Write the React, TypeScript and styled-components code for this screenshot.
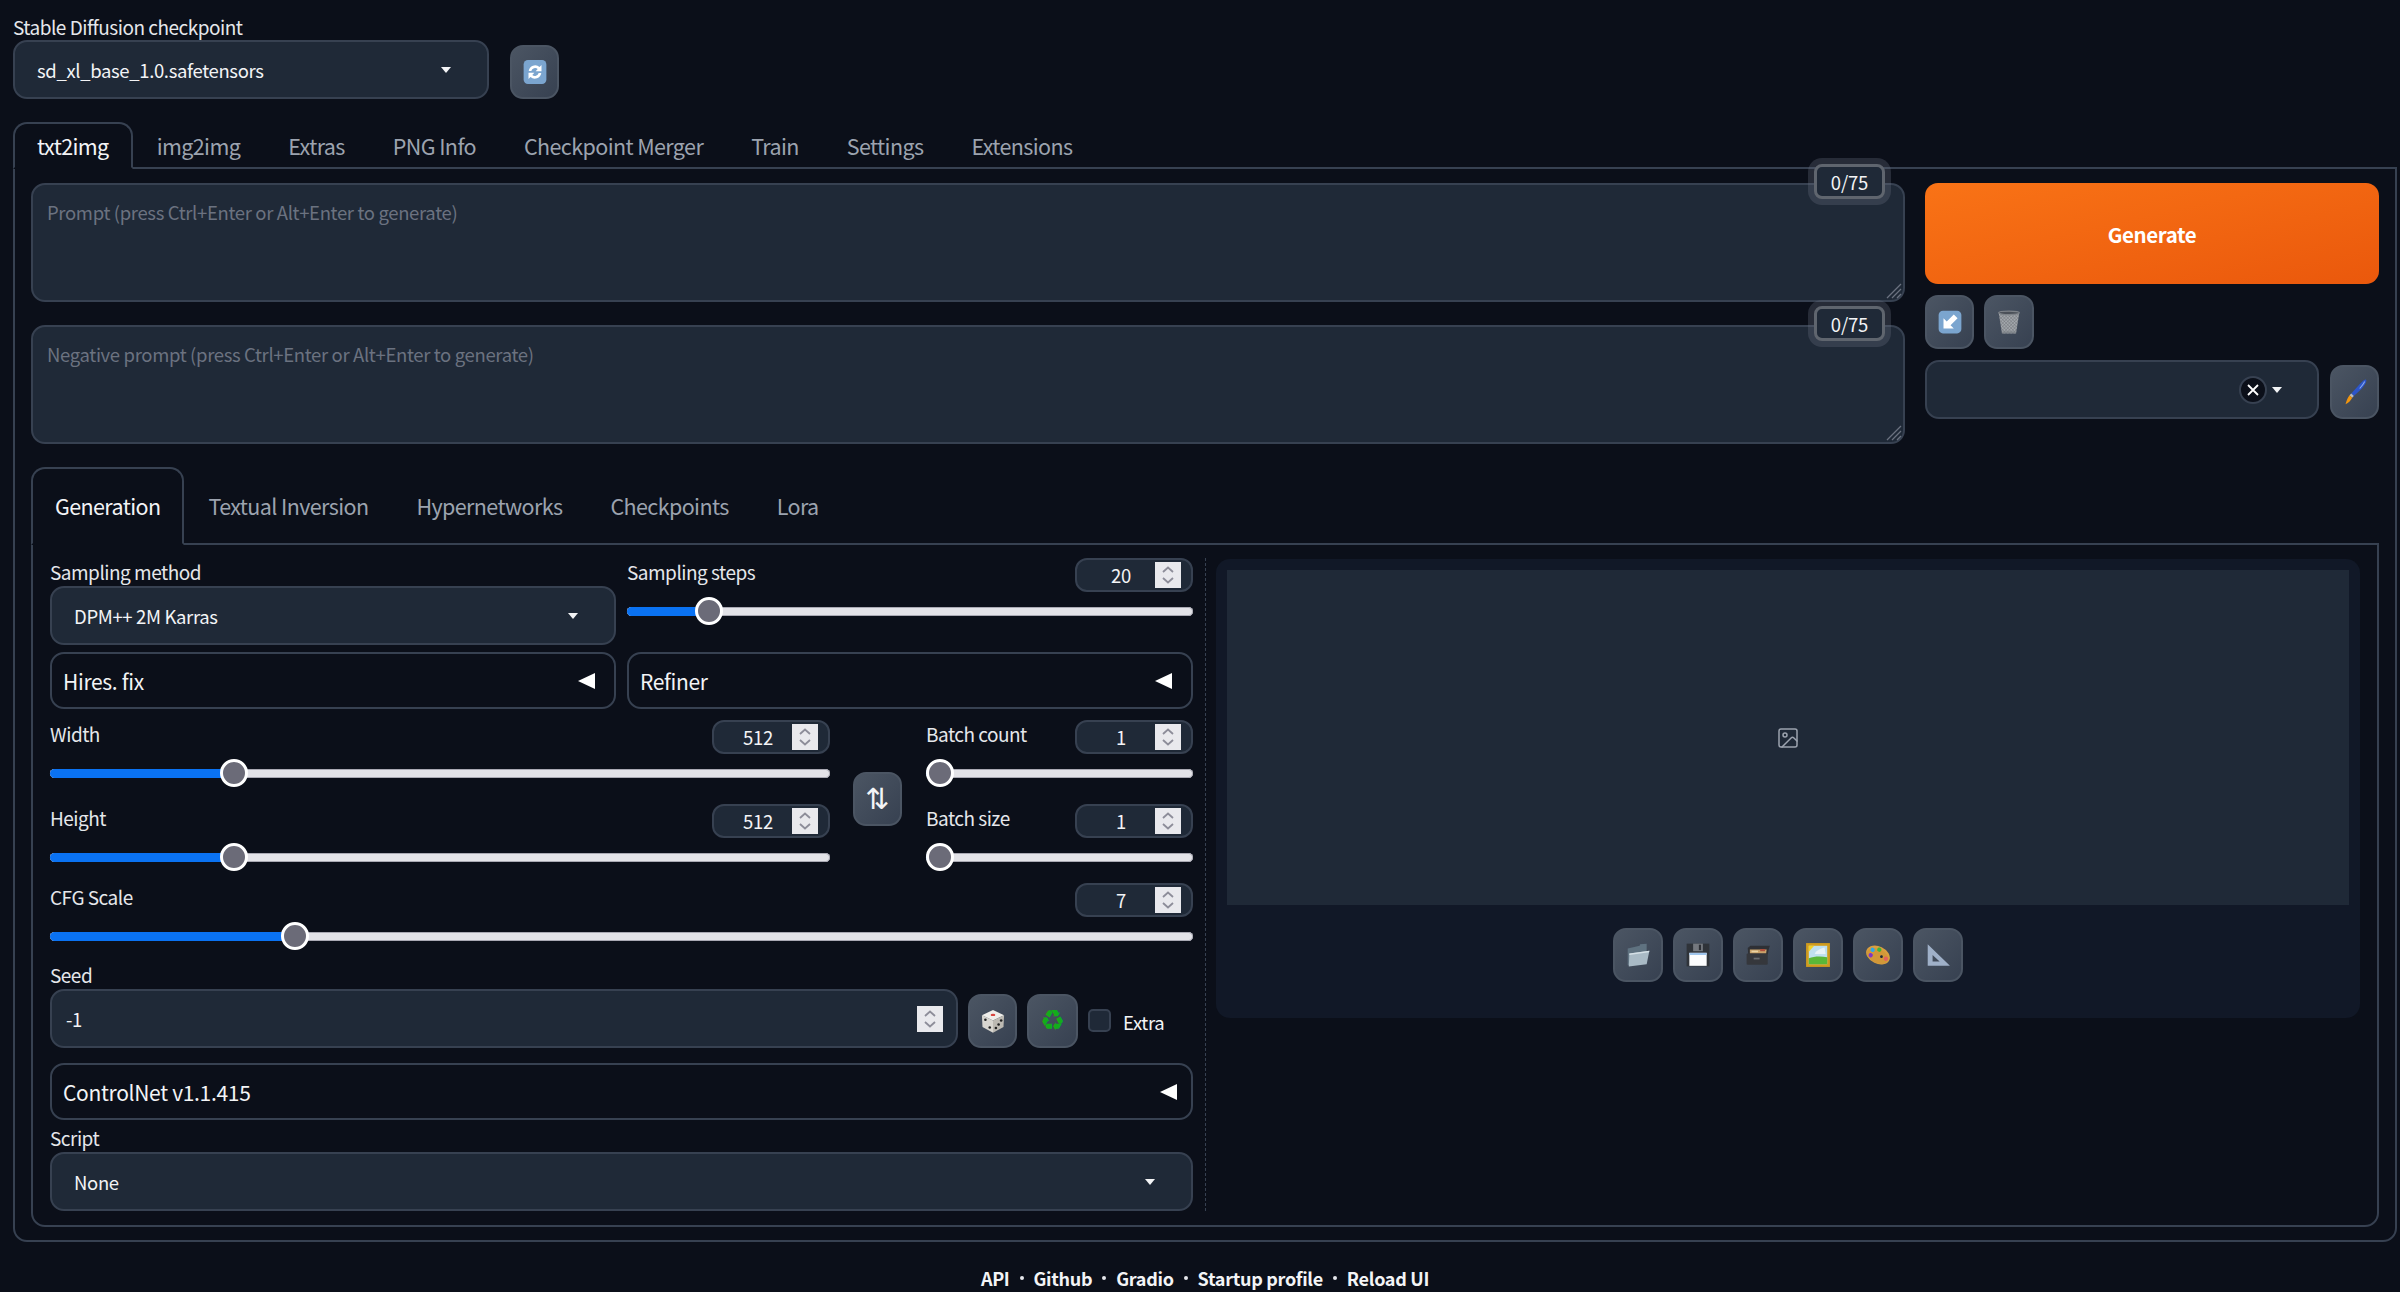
import React from "react";
import styled, { createGlobalStyle } from "styled-components";
import { Image as ImageIcon } from "lucide-react";

const Global = createGlobalStyle`
  html, body { margin: 0; padding: 0; background: #0b0f19; overflow: hidden; }
  * { box-sizing: border-box; }
  body { font-family: "Noto Sans CJK SC", "Noto Sans", sans-serif; color: #f3f4f6; }
`;

const Page = styled.div`
  width: 2400px;
  padding: 15px 3px 0 13px;
  display: flex;
  flex-direction: column;
`;
const FieldLabel = styled.div`
  font-size: 19px;
  letter-spacing: -0.5px;
  line-height: 24px;
  height: 25px;
  color: #e5e7eb;
`;
const Inline = styled.div<{ $gap?: number }>`
  display: flex;
  align-items: flex-end;
  gap: ${(p) => p.$gap ?? 11}px;
`;
const Dropdown = styled.div<{ $w?: number; $h?: number }>`
  width: ${(p) => (p.$w ? `${p.$w}px` : "100%")};
  height: ${(p) => p.$h ?? 59}px;
  flex: none;
  background: #1f2937;
  border: 2px solid #374151;
  border-radius: 14px;
  padding: 0 36px 0 22px;
  display: flex;
  align-items: center;
  justify-content: space-between;
  font-size: 18.5px;
  letter-spacing: -0.35px;
  color: #f3f4f6;
`;
const Caret = styled.span`
  width: 0;
  height: 0;
  border-left: 5.5px solid transparent;
  border-right: 5.5px solid transparent;
  border-top: 6px solid #f3f4f6;
`;
const IconBtn = styled.button<{ $w?: number }>`
  width: ${(p) => p.$w ?? 49}px;
  height: 54px;
  flex: none;
  padding: 0;
  display: flex;
  align-items: center;
  justify-content: center;
  color: #f3f4f6;
  background: linear-gradient(to bottom right, #4b5563, #374151);
  border: 2px solid #4b5563;
  border-radius: 13px;
`;
const TabBar = styled.div<{ $h: number; $mt?: number }>`
  display: flex;
  height: ${(p) => p.$h}px;
  margin-top: ${(p) => p.$mt ?? 0}px;
  align-items: stretch;
  position: relative;
  z-index: 1;
`;
const Tab = styled.div<{ $active?: boolean }>`
  display: flex;
  align-items: center;
  padding: 0 22px 1px;
  font-size: 21.5px;
  letter-spacing: -0.6px;
  color: ${(p) => (p.$active ? "#f3f4f6" : "#9ca3af")};
  border: 2px solid ${(p) => (p.$active ? "#374151" : "transparent")};
  border-bottom: 2px solid ${(p) => (p.$active ? "#0b0f19" : "transparent")};
  border-radius: 14px 14px 0 0;
  margin-bottom: -2px;
`;
const MainPanel = styled.div`
  border: 2px solid #374151;
  border-radius: 0 0 14px 14px;
  padding: 14px 16px 14px 16px;
  height: 1075px;
`;
const TopRow = styled.div`
  display: flex;
  gap: 20px;
  align-items: flex-start;
`;
const PromptCol = styled.div`
  width: 1874px;
  display: flex;
  flex-direction: column;
  gap: 23px;
`;
const PromptWrap = styled.div`
  position: relative;
  height: 119px;
`;
const PromptInput = styled.textarea`
  display: block;
  width: 100%;
  height: 100%;
  resize: none;
  background: #1f2937;
  border: 2px solid #374151;
  border-radius: 14px;
  padding: 14px 14px;
  outline: none;
  font-family: inherit;
  font-size: 18.5px;
  letter-spacing: -0.35px;
  line-height: 26px;
  color: #f3f4f6;
  &::placeholder { color: #6b7280; opacity: 1; }
`;
const ResizeMark = styled.svg`
  position: absolute;
  right: 3px;
  bottom: 3px;
  width: 16px;
  height: 16px;
`;
const Counter = styled.div`
  position: absolute;
  top: -19px;
  right: 20px;
  width: 71px;
  height: 35px;
  display: flex;
  align-items: center;
  justify-content: center;
  font-size: 18.5px;
  letter-spacing: -0.2px;
  color: #f3f4f6;
  background: #1f2937;
  border: 3px solid #5f656e;
  border-radius: 8px;
  box-shadow: 0 0 0 6px rgba(107, 114, 128, 0.3);
`;
const ActionCol = styled.div`
  width: 454px;
  display: flex;
  flex-direction: column;
  gap: 11px;
`;
const GenerateBtn = styled.button`
  height: 101px;
  border: none;
  border-radius: 13px;
  background: linear-gradient(to bottom right, #f97316, #ea580c);
  color: #fff;
  font-family: inherit;
  font-size: 20.5px;
  letter-spacing: -0.4px;
  font-weight: 700;
`;
const ClearBtn = styled.span`
  width: 28px;
  height: 28px;
  border-radius: 50%;
  background: #0b0f19;
  border: 2px solid #374151;
  display: flex;
  align-items: center;
  justify-content: center;
`;
const StyleField = styled(Dropdown)`
  padding: 0 35px 0 22px;
  justify-content: flex-end;
  gap: 5px;
`;
const SubPanel = styled.div`
  border: 2px solid #374151;
  border-radius: 0 0 14px 14px;
  height: 684px;
  padding: 13px 16px 0 17px;
  display: flex;
  align-items: flex-start;
`;
const LeftCol = styled.div`
  width: 1143px;
  flex: none;
  display: flex;
  flex-direction: column;
`;
const Divider = styled.div`
  width: 0;
  height: 653px;
  flex: none;
  margin: 0 10px 0 12px;
  border-left: 1.5px dashed #374151;
`;
const TwoCols = styled.div<{ $mt?: number }>`
  display: grid;
  grid-template-columns: 566px 566px;
  gap: 11px;
  margin-top: ${(p) => p.$mt ?? 0}px;
`;
const LabelLine = styled.div<{ $mt?: number }>`
  font-size: 19px;
  letter-spacing: -0.5px;
  line-height: 28px;
  height: 28px;
  margin-top: ${(p) => p.$mt ?? 0}px;
  color: #e5e7eb;
`;
const SliderHead = styled.div`
  display: flex;
  justify-content: space-between;
  align-items: flex-start;
  height: 34px;
`;
const NumberBox = styled.div<{ $w?: number }>`
  width: ${(p) => p.$w ?? 118}px;
  height: 34px;
  background: #1f2937;
  border: 2px solid #374151;
  border-radius: 12px;
  display: flex;
  align-items: center;
  justify-content: flex-end;
  padding-right: 10px;
  font-size: 18.5px;
  letter-spacing: -0.35px;
  color: #f3f4f6;
`;
const NumberValue = styled.span`
  width: 50px;
  text-align: center;
  margin-right: 9px;
`;
const Spin = styled.span`
  width: 26px;
  height: 26px;
  flex: none;
  background: #e9e9ed;
  display: flex;
  align-items: center;
  justify-content: center;
`;
const SliderWrap = styled.div<{ $mt?: number }>`
  margin-top: ${(p) => p.$mt ?? 0}px;
`;
const Track = styled.div`
  position: relative;
  height: 28px;
  margin-top: 5px;
  display: flex;
  align-items: center;
`;
const Rail = styled.div`
  width: 100%;
  height: 9px;
  border-radius: 5px;
  background: #e3e3e8;
  box-shadow: inset 0 0 0 1px #a9a9b3;
  overflow: hidden;
`;
const Fill = styled.div`
  height: 100%;
  background: #0a72f2;
`;
const Thumb = styled.div`
  position: absolute;
  top: 0;
  width: 28px;
  height: 28px;
  margin-left: -14px;
  border-radius: 50%;
  background: #6b6b78;
  border: 3px solid #fff;
`;
const AccordionBox = styled.div<{ $mt?: number; $pr?: number }>`
  height: 57px;
  border: 2px solid #374151;
  border-radius: 14px;
  padding: 0 ${(p) => p.$pr ?? 19}px 0 11px;
  margin-top: ${(p) => p.$mt ?? 0}px;
  display: flex;
  align-items: center;
  justify-content: space-between;
  font-size: 21px;
  letter-spacing: -0.32px;
  color: #f3f4f6;
`;
const LeftTriangle = styled.span`
  width: 0;
  height: 0;
  border-top: 8.5px solid transparent;
  border-bottom: 8.5px solid transparent;
  border-right: 17px solid #fff;
`;
const DimRow = styled.div`
  display: flex;
  margin-top: 11px;
`;
const DimCol = styled.div<{ $w: number; $ml?: number }>`
  width: ${(p) => p.$w}px;
  margin-left: ${(p) => p.$ml ?? 0}px;
  display: flex;
  flex-direction: column;
  gap: 17px;
  flex: none;
`;
const SwapSlot = styled.div`
  margin: 52px 0 0 23px;
`;
const SwapGlyph = styled.span`
  font-family: "DejaVu Sans", sans-serif;
  font-size: 29px;
  line-height: 1;
`;
const RecycleGlyph = styled.span`
  font-family: "DejaVu Sans", sans-serif;
  font-size: 28px;
  line-height: 1;
  color: #12ad1a;
`;
const SeedBox = styled(NumberBox)`
  width: 908px;
  height: 59px;
  border-radius: 14px;
  justify-content: space-between;
  padding: 0 13px 0 14px;
`;
const Check = styled.span`
  width: 23px;
  height: 23px;
  flex: none;
  margin: 0 2px 16px 0;
  background: #1f2937;
  border: 2px solid #374151;
  border-radius: 5px;
`;
const ExtraText = styled.span`
  font-size: 18.5px;
  letter-spacing: -0.35px;
  line-height: 26px;
  margin-bottom: 13px;
  color: #f3f4f6;
`;
const RightCol = styled.div`
  width: 1144px;
  height: 459px;
  flex: none;
  margin-top: 1px;
  background: #111827;
  border-radius: 14px;
  padding: 11px;
  display: flex;
  flex-direction: column;
`;
const ImageArea = styled.div`
  height: 335px;
  background: #1f2937;
  display: flex;
  align-items: center;
  justify-content: center;
  color: #9ca3af;
`;
const ToolRow = styled.div`
  margin-top: 23px;
  display: flex;
  justify-content: center;
  gap: 10px;
`;
const Footer = styled.div`
  margin-top: 24px;
  height: 24px;
  display: flex;
  justify-content: center;
  align-items: center;
  gap: 9px;
  font-size: 18px;
  letter-spacing: -0.3px;
  line-height: 24px;
  font-weight: 700;
  color: #f3f4f6;
`;
const Dot = styled.span`
  width: 4px;
  height: 4px;
  margin: 0 1px;
  border-radius: 50%;
  background: #e5e7eb;
`;

const I = ({ children, s = 26 }: { children: React.ReactNode; s?: number }) => (
  <svg width={s} height={s} viewBox="0 0 24 24">{children}</svg>
);
const Refresh = () => (
  <I>
    <rect x="1.500" y="1" width="21" height="22" rx="4" fill="#7ba5cf" />
    <path d="M6.200 11a6 6 0 0 1 10-3.600L18 5.600v5.600h-5.400l1.900-2A3.700 3.700 0 0 0 8.600 11z" fill="#fff" />
    <path d="M17.800 13a6 6 0 0 1-10 3.600L6 18.400v-5.600h5.400l-1.900 2a3.700 3.700 0 0 0 5.900-1.800z" fill="#fff" />
  </I>
);
const ArrowDL = () => (
  <I>
    <rect x="1.500" y="1.500" width="21" height="21" rx="4" fill="#7ba5cf" />
    <path d="M6 18V8.500l3 3L15.500 5 19 8.500 12.500 15l3 3z" fill="#fff" />
  </I>
);
const Trash = () => (
  <I>
    <defs>
      <pattern id="mesh" width="2.200" height="2.200" patternUnits="userSpaceOnUse" patternTransform="rotate(45)">
        <rect width="2.200" height="2.200" fill="#a2a6ab" />
        <path d="M0 0h2.200M0 0v2.200" stroke="#62666b" strokeWidth=".6" />
      </pattern>
    </defs>
    <path d="M2.500 3.500h19L18.500 22.500h-13z" fill="url(#mesh)" />
    <ellipse cx="12" cy="3.500" rx="9.500" ry="1.600" fill="#4b5058" stroke="#7d8288" strokeWidth="1.200" />
    <path d="M5.800 21.500h12.400" stroke="#80858b" strokeWidth="1.600" />
  </I>
);
const Brush = () => (
  <I s={28}>
    <path d="M21.500 1.500c1 1-1 4.500-4 8L11 15.500 8.800 13.200 15 6.500c3-3.200 5.500-5.900 6.500-5z" fill="#2d55c9" />
    <path d="M20 3c.6.300-1.800 3.500-4 6" stroke="#8fb0f0" strokeWidth=".9" fill="none" />
    <path d="M8.800 13.200 11 15.500l-1.400 1.500-2.300-2.300z" fill="#b9bcc0" />
    <path d="M7.300 14.700l2.300 2.300c-1 1.800-3 4.700-5.700 5.500.6-2.800 1.800-5.800 3.400-7.800z" fill="#f1950f" />
  </I>
);
const Dice = () => (
  <I s={28}>
    <path d="M12 2.500 21.500 7 12 11.500 2.500 7z" fill="#efeeea" />
    <path d="M2.500 7 12 11.500V22L3 17.200z" fill="#d8d6d0" />
    <path d="M21.500 7 12 11.500V22l9-4.800z" fill="#bcb9b2" />
    <ellipse cx="12" cy="6.800" rx="2" ry="1" fill="#d8453f" />
    <circle cx="5.500" cy="11" r="1.100" fill="#222" />
    <circle cx="9.200" cy="17.500" r="1.100" fill="#222" />
    <circle cx="14.500" cy="18" r="1.100" fill="#222" />
    <circle cx="16.800" cy="15" r="1.100" fill="#222" />
    <circle cx="19" cy="11.500" r="1.100" fill="#222" />
  </I>
);
const Folder = () => (
  <I>
    <path d="M2.500 6 13.500 3.500 14 2l6-.5V8L5 22l-2.500-.5z" fill="#5f7280" />
    <path d="M4 10.500 22.500 8 20 20.500 3.500 22.500z" fill="#a9bac5" />
    <path d="M4 10.500 22.500 8l-.3 1.500L4 12z" fill="#d5e0e6" />
  </I>
);
const Floppy = () => (
  <I>
    <path d="M1.500 1.500h21v21h-21z" fill="#2f3339" />
    <rect x="7.500" y="1.500" width="9" height="7" fill="#74787e" />
    <rect x="12.800" y="2.500" width="2" height="5" fill="#2d3036" />
    <rect x="4" y="10" width="16" height="12" fill="#fbfcfd" />
    <rect x="4" y="10" width="16" height="2" fill="#9fc5ec" />
  </I>
);
const Cabinet = () => (
  <I>
    <path d="M2.500 5.500 5 3.500h18l-1 3-1 5H3z" fill="#2e3035" />
    <path d="M4.500 7h15.500l-.5 3.500H4.500z" fill="#c9a26a" />
    <path d="M14 6.500h4.500v2H14z" fill="#b04f3c" />
    <path d="M6 8h6v1.500H6z" fill="#ead3a3" />
    <rect x="1.500" y="10.500" width="19.500" height="10.500" rx="1" fill="#35373c" />
    <rect x="8" y="14.500" width="5.500" height="1.600" fill="#6a6c70" />
  </I>
);
const Picture = () => (
  <I>
    <rect x="1" y="1" width="22" height="22" fill="#d19c1d" />
    <rect x="3.500" y="3.500" width="17" height="17" fill="#bfe0ef" />
    <path d="M3.500 3.500h5L3.500 9z" fill="#f2d227" />
    <path d="M10 9c2-2 5-3 8-4l1 6H9z" fill="#e8f3f7" />
    <path d="M3.500 15c5-2 11-2 17-1v6.500h-17z" fill="#5ab738" />
  </I>
);
const Palette = () => (
  <I>
    <g transform="rotate(25 12 12)">
      <ellipse cx="12" cy="12" rx="11.500" ry="8" fill="#d99f3f" />
      <ellipse cx="12" cy="13" rx="10.500" ry="6.500" fill="#c98e30" opacity=".4" />
      <circle cx="5.500" cy="9.800" r="2" fill="#2ea8e8" />
      <circle cx="11" cy="7" r="2" fill="#3db53b" />
      <circle cx="6" cy="15" r="2" fill="#8136c7" />
      <circle cx="20" cy="12" r="2" fill="#e2615f" />
      <circle cx="15.500" cy="12" r="1.300" fill="#1f2937" />
    </g>
  </I>
);
const SetSquare = () => (
  <I>
    <path fillRule="evenodd" d="M2.500 2 23 22H2.500zM7 12v6h6.500z" fill="#9fb0c8" />
  </I>
);
const Cross = () => (
  <svg width="14" height="14" viewBox="0 0 14 14">
    <path d="M2 2l10 10M12 2 2 12" stroke="#fff" strokeWidth="1.800" />
  </svg>
);
const Spinner = () => (
  <Spin>
    <svg width="14" height="20" viewBox="0 0 14 20" fill="none" stroke="#8d8d99" strokeWidth="1.800">
      <path d="M2 7l5-4.500L12 7M2 13l5 4.500L12 13" />
    </svg>
  </Spin>
);
const Resizer = () => (
  <ResizeMark viewBox="0 0 16 16" stroke="#6b7280" strokeWidth="1.300">
    <path d="M1 15 15 1M6 15 15 6M11 15l4-4" />
  </ResizeMark>
);

const SliderField = ({ label, value, at, mt }: { label: string; value: string; at: number; mt?: number }) => (
  <SliderWrap $mt={mt}>
    <SliderHead>
      <LabelLine>{label}</LabelLine>
      <NumberBox>
        <NumberValue>{value}</NumberValue>
        <Spinner />
      </NumberBox>
    </SliderHead>
    <Track>
      <Rail>
        <Fill style={{ width: at }} />
      </Rail>
      <Thumb style={{ left: at }} />
    </Track>
  </SliderWrap>
);

const mainTabs = ["img2img", "Extras", "PNG Info", "Checkpoint Merger", "Train", "Settings", "Extensions"];
const subTabs = ["Textual Inversion", "Hypernetworks", "Checkpoints", "Lora"];
const footer = ["API", "Github", "Gradio", "Startup profile", "Reload UI"];

export default function App() {
  return (
    <Page>
      <Global />
      <FieldLabel>Stable Diffusion checkpoint</FieldLabel>
      <Inline $gap={21}>
        <Dropdown $w={476}>
          sd_xl_base_1.0.safetensors
          <Caret />
        </Dropdown>
        <IconBtn>
          <Refresh />
        </IconBtn>
      </Inline>

      <TabBar $h={45} $mt={23}>
        <Tab $active>txt2img</Tab>
        {mainTabs.map((t) => (
          <Tab key={t}>{t}</Tab>
        ))}
      </TabBar>
      <MainPanel>
        <TopRow>
          <PromptCol>
            <PromptWrap>
              <PromptInput placeholder="Prompt (press Ctrl+Enter or Alt+Enter to generate)" />
              <Resizer />
              <Counter>0/75</Counter>
            </PromptWrap>
            <PromptWrap>
              <PromptInput placeholder="Negative prompt (press Ctrl+Enter or Alt+Enter to generate)" />
              <Resizer />
              <Counter>0/75</Counter>
            </PromptWrap>
          </PromptCol>
          <ActionCol>
            <GenerateBtn>Generate</GenerateBtn>
            <Inline $gap={10}>
              <IconBtn>
                <ArrowDL />
              </IconBtn>
              <IconBtn $w={50}>
                <Trash />
              </IconBtn>
            </Inline>
            <Inline>
              <StyleField $w={394}>
                <ClearBtn>
                  <Cross />
                </ClearBtn>
                <Caret />
              </StyleField>
              <IconBtn>
                <Brush />
              </IconBtn>
            </Inline>
          </ActionCol>
        </TopRow>

        <TabBar $h={76} $mt={23}>
          <Tab $active>Generation</Tab>
          {subTabs.map((t) => (
            <Tab key={t}>{t}</Tab>
          ))}
        </TabBar>
        <SubPanel>
          <LeftCol>
            <TwoCols>
              <div>
                <LabelLine>Sampling method</LabelLine>
                <Dropdown>
                  DPM++ 2M Karras
                  <Caret />
                </Dropdown>
              </div>
              <SliderField label="Sampling steps" value="20" at={82} />
            </TwoCols>
            <TwoCols $mt={7}>
              <AccordionBox>
                Hires. fix
                <LeftTriangle />
              </AccordionBox>
              <AccordionBox>
                Refiner
                <LeftTriangle />
              </AccordionBox>
            </TwoCols>
            <DimRow>
              <DimCol $w={780}>
                <SliderField label="Width" value="512" at={184} />
                <SliderField label="Height" value="512" at={184} />
              </DimCol>
              <SwapSlot>
                <IconBtn>
                  <SwapGlyph>⇅</SwapGlyph>
                </IconBtn>
              </SwapSlot>
              <DimCol $w={267} $ml={24}>
                <SliderField label="Batch count" value="1" at={14} />
                <SliderField label="Batch size" value="1" at={14} />
              </DimCol>
            </DimRow>
            <SliderField label="CFG Scale" value="7" at={245} mt={12} />
            <LabelLine $mt={11}>Seed</LabelLine>
            <Inline $gap={10}>
              <SeedBox>
                -1
                <Spinner />
              </SeedBox>
              <IconBtn>
                <Dice />
              </IconBtn>
              <IconBtn $w={51}>
                <RecycleGlyph>♻</RecycleGlyph>
              </IconBtn>
              <Check />
              <ExtraText>Extra</ExtraText>
            </Inline>
            <AccordionBox $mt={15} $pr={14}>
              ControlNet v1.1.415
              <LeftTriangle />
            </AccordionBox>
            <LabelLine $mt={4}>Script</LabelLine>
            <Dropdown>
              None
              <Caret />
            </Dropdown>
          </LeftCol>
          <Divider />
          <RightCol>
            <ImageArea>
              <ImageIcon size={24} strokeWidth={1.5} />
            </ImageArea>
            <ToolRow>
              <IconBtn $w={50}><Folder /></IconBtn>
              <IconBtn $w={50}><Floppy /></IconBtn>
              <IconBtn $w={50}><Cabinet /></IconBtn>
              <IconBtn $w={50}><Picture /></IconBtn>
              <IconBtn $w={50}><Palette /></IconBtn>
              <IconBtn $w={50}><SetSquare /></IconBtn>
            </ToolRow>
          </RightCol>
        </SubPanel>
      </MainPanel>
      <Footer>
        {footer.map((f, i) => (
          <React.Fragment key={f}>
            {i > 0 && <Dot />}
            <span>{f}</span>
          </React.Fragment>
        ))}
      </Footer>
    </Page>
  );
}
